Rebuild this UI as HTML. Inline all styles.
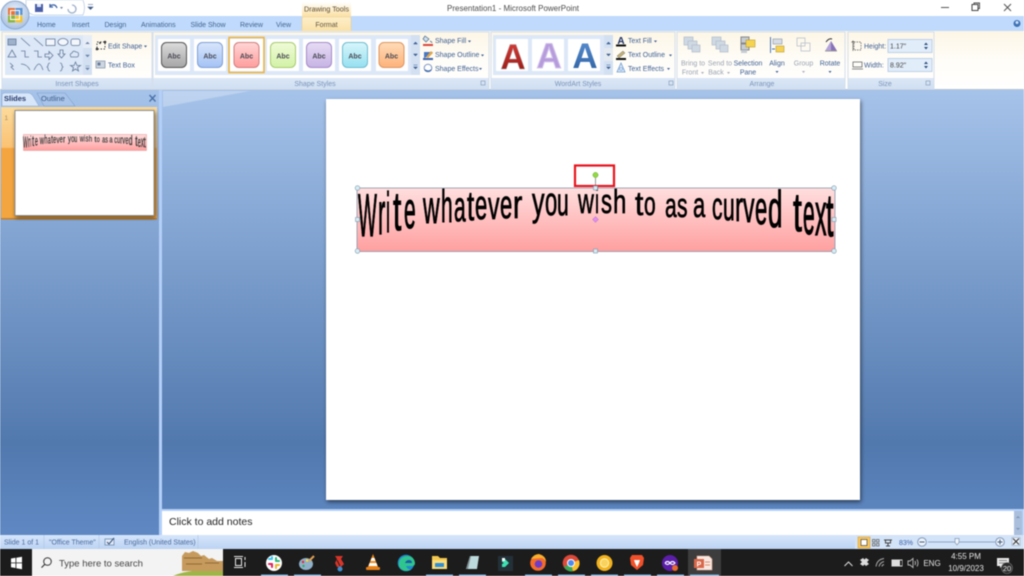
<!DOCTYPE html>
<html><head><meta charset="utf-8"><title>Presentation1 - Microsoft PowerPoint</title>
<style>html,body{margin:0;padding:0;width:1024px;height:576px;overflow:hidden;background:#fff}
svg{display:block;font-family:"Liberation Sans",sans-serif;filter:blur(.4px)}
.t{font-size:7px;fill:#3d5f92}.g{font-size:7px;fill:#7b93b8}.d{font-size:7px;fill:#9aa3b0}</style></head><body>
<svg width="1024" height="576" viewBox="0 0 1024 576" xmlns="http://www.w3.org/2000/svg">
<defs>
<linearGradient id="bg" x1="0" y1="0" x2="0" y2="1"><stop offset="0" stop-color="#a6c3ea"/><stop offset=".4" stop-color="#7a9dcc"/><stop offset=".79" stop-color="#5279ae"/><stop offset="1" stop-color="#6089c4"/></linearGradient>
<linearGradient id="rib" x1="0" y1="0" x2="0" y2="1"><stop offset="0" stop-color="#fdf6e6"/><stop offset=".5" stop-color="#fffdf8"/><stop offset="1" stop-color="#ffffff"/></linearGradient>
<linearGradient id="lab" x1="0" y1="0" x2="0" y2="1"><stop offset="0" stop-color="#dbe7f6"/><stop offset="1" stop-color="#cfdff2"/></linearGradient>
<linearGradient id="pink" x1="0" y1="0" x2="0" y2="1"><stop offset="0" stop-color="#ffdede"/><stop offset=".55" stop-color="#ffbcbc"/><stop offset="1" stop-color="#ff9f9f"/></linearGradient>
<linearGradient id="org" x1="0" y1="0" x2="0" y2="1"><stop offset="0" stop-color="#fcdb9c"/><stop offset=".36" stop-color="#fbc274"/><stop offset=".37" stop-color="#f5a540"/><stop offset="1" stop-color="#f3a63f"/></linearGradient>
<linearGradient id="fmt" x1="0" y1="0" x2="0" y2="1"><stop offset="0" stop-color="#fdeec9"/><stop offset="1" stop-color="#fbe1a8"/></linearGradient>
<linearGradient id="dt" x1="0" y1="0" x2="0" y2="1"><stop offset="0" stop-color="#fff"/><stop offset="1" stop-color="#fbdfa0"/></linearGradient>
<linearGradient id="b1" x1="0" y1="0" x2="0" y2="1"><stop offset="0" stop-color="#dcdcdc"/><stop offset="1" stop-color="#a5a5a5"/></linearGradient>
<linearGradient id="b2" x1="0" y1="0" x2="0" y2="1"><stop offset="0" stop-color="#d9e6fb"/><stop offset="1" stop-color="#a3c2f4"/></linearGradient>
<linearGradient id="b3" x1="0" y1="0" x2="0" y2="1"><stop offset="0" stop-color="#ffd6d6"/><stop offset="1" stop-color="#ff9d9d"/></linearGradient>
<linearGradient id="b4" x1="0" y1="0" x2="0" y2="1"><stop offset="0" stop-color="#f0fbd8"/><stop offset="1" stop-color="#d2f2a6"/></linearGradient>
<linearGradient id="b5" x1="0" y1="0" x2="0" y2="1"><stop offset="0" stop-color="#e6dcf4"/><stop offset="1" stop-color="#c7b3e4"/></linearGradient>
<linearGradient id="b6" x1="0" y1="0" x2="0" y2="1"><stop offset="0" stop-color="#d8f6fb"/><stop offset="1" stop-color="#95e0f0"/></linearGradient>
<linearGradient id="b7" x1="0" y1="0" x2="0" y2="1"><stop offset="0" stop-color="#ffdcb8"/><stop offset="1" stop-color="#fdb27a"/></linearGradient>
<linearGradient id="sts" x1="0" y1="0" x2="0" y2="1"><stop offset="0" stop-color="#d6e6fb"/><stop offset="1" stop-color="#bcd3f3"/></linearGradient>
<linearGradient id="ar" x1="0" y1="0" x2="0" y2="1"><stop offset="0" stop-color="#e0403a"/><stop offset="1" stop-color="#8e1512"/></linearGradient>
<linearGradient id="ab" x1="0" y1="0" x2="0" y2="1"><stop offset="0" stop-color="#5b92d4"/><stop offset="1" stop-color="#2a5d9e"/></linearGradient>
<radialGradient id="off" cx=".5" cy=".4" r=".6"><stop offset="0" stop-color="#f0f6ff"/><stop offset="1" stop-color="#a9c0df"/></radialGradient>
<filter id="sh" x="-5%" y="-5%" width="110%" height="110%"><feDropShadow dx="1" dy="2" stdDeviation="2" flood-color="#000" flood-opacity=".55"/></filter>
</defs>

<!-- title bar + tabs -->
<rect width="1024" height="16" fill="#fff"/>
<rect y="16" width="1024" height="16" fill="#bfdafc"/>
<path d="M26 0H83Q86 8 83 15H36Q29 15 26 9Z" fill="#fff" stroke="#b9cde6" stroke-width=".8"/>
<rect x="35" y="4" width="8" height="8" fill="#4a5fa8"/><rect x="37" y="4" width="4" height="3" fill="#dfe7f5"/>
<path d="M50 6q5-3 7 2M50 4v3h3" fill="none" stroke="#3c64a8" stroke-width="1.3"/>
<path d="M60 7h3l-1.500 2z" fill="#6b7fa0"/>
<path d="M68 9a4 4 0 1 0 4-4" fill="none" stroke="#9db0c9" stroke-width="1.300"/>
<path d="M88 4.500h5M88 7h5l-2.500 2.500z" fill="#3c5a85" stroke="#3c5a85" stroke-width=".6"/>
<circle cx="15" cy="15" r="14" fill="url(#off)" stroke="#8ea9cc"/>
<rect x="8" y="8" width="7" height="7" fill="#e8743a"/><rect x="15.500" y="8" width="7" height="7" fill="#5b93d3"/><rect x="8" y="15.500" width="7" height="7" fill="#8db43e"/><rect x="15.500" y="15.500" width="7" height="7" fill="#f4c431"/>
<rect x="10.500" y="10.500" width="9" height="9" fill="none" stroke="#fff" stroke-width="1"/>

<text x="447" y="11" font-size="8" fill="#4b4b4b" textLength="132" lengthAdjust="spacingAndGlyphs">Presentation1 - Microsoft PowerPoint</text>
<path d="M941 7.500h8" stroke="#555" stroke-width="1"/>
<rect x="972" y="4.500" width="6" height="6" fill="#fff" stroke="#444"/><path d="M974 4.500v-1.500h5.500v5.500h-1.500" fill="none" stroke="#444" stroke-width=".9"/>
<path d="M1004 4l7 7M1011 4l-7 7" stroke="#555" stroke-width="1"/>

<rect x="302" y="2" width="49" height="15" fill="url(#dt)"/>
<text x="304" y="11.500" font-size="7" fill="#5a4a2c" textLength="45" lengthAdjust="spacingAndGlyphs">Drawing Tools</text>
<path d="M302 31V19q0-2 2-2h45q2 0 2 2V31z" fill="url(#fmt)" stroke="#e8cf98" stroke-width=".6"/>
<text x="326.500" y="27" font-size="7" fill="#5f5540" text-anchor="middle">Format</text>
<g font-size="7" fill="#44638f">
<text x="37" y="27">Home</text><text x="72" y="27">Insert</text><text x="104.500" y="27">Design</text><text x="141" y="27">Animations</text><text x="190.500" y="27">Slide Show</text><text x="240" y="27">Review</text><text x="276" y="27">View</text>
</g>
<circle cx="1017" cy="23.500" r="3.500" fill="#3f72b5"/><circle cx="1017" cy="22.500" r="1.500" fill="#cfe0f5"/>

<!-- ribbon -->
<rect y="31" width="1024" height="58" fill="url(#rib)"/>
<rect y="89" width="1024" height="1.500" fill="#b9c5d6"/>
<g fill="url(#lab)"><rect x="2" y="78" width="150" height="11"/><rect x="153" y="78" width="336" height="11"/><rect x="491" y="78" width="184" height="11"/><rect x="677" y="78" width="168" height="11"/><rect x="848" y="78" width="86" height="11"/></g>
<g stroke="#d5dfec" stroke-width="1" fill="none"><rect x="2" y="32" width="150" height="57"/><rect x="153" y="32" width="336" height="57"/><rect x="491" y="32" width="184" height="57"/><rect x="677" y="32" width="168" height="57"/><rect x="848" y="32" width="86" height="57"/></g>
<text x="77" y="86" class="g" text-anchor="middle">Insert Shapes</text>
<text x="315" y="86" class="g" text-anchor="middle">Shape Styles</text>
<text x="578" y="86" class="g" text-anchor="middle">WordArt Styles</text>
<text x="762" y="86" class="g" text-anchor="middle">Arrange</text>
<text x="885" y="86" class="g" text-anchor="middle">Size</text>
<g fill="none" stroke="#8ba0bd" stroke-width=".7"><rect x="481" y="81" width="4" height="4"/><rect x="669" y="81" width="4" height="4"/><rect x="926" y="81" width="4" height="4"/></g>

<!-- insert shapes -->
<rect x="5" y="35" width="78" height="40" fill="#dce8f7"/>
<rect x="83" y="35" width="9" height="40" fill="#d2e0f2"/>
<rect x="83" y="35" width="9" height="13" fill="#e6edf6"/>
<path d="M85.500 44l2-2 2 2M85.500 55h4l-2 2zM85.500 66h4M85.500 68h4l-2 2z" fill="#6f86a8" stroke="#6f86a8" stroke-width=".5"/>
<g fill="none" stroke="#65799a" stroke-width=".8">
<rect x="8" y="39" width="8" height="6" fill="#9fb2cc"/><path d="M21 38l9 8M34 38l9 8"/><rect x="46" y="39" width="9" height="6.500" fill="#f3f6fb"/><ellipse cx="63" cy="42" rx="5" ry="3.500" fill="#f3f6fb"/><rect x="71" y="39" width="9" height="6.500" rx="2" fill="#f3f6fb"/>
<path d="M12 50l4 7h-8zM21 51h4v6h4M34 51h4v6h4M45 54h4v-2.500l4 4-4 4v-2.500h-4zM60 50h3v4h2l-3.500 4-3.500-4h2zM71 57q-2-3 1-4 1-3 4-1 3 0 2.500 3 0 2-2 2z"/>
<path d="M10 63l3 3-2 1 3 3M21 64q6 0 9 6M34 70q3-6 5-6t4 6M50 63q-2 0-2 3l-1 1 1 1q0 3 2 3M60 63q2 0 2 3l1 1-1 1q0 3-2 3M75.500 62l1.500 3.500h3.500l-3 2 1 3.500-3-2-3 2 1-3.500-3-2h3.500z"/>
</g>
<g transform="translate(96,41)"><rect x="1" y="1" width="8" height="7" fill="none" stroke="#444" stroke-dasharray="1.500 1.500"/><circle cx="1" cy="8" r="1.300" fill="#333"/><circle cx="9" cy="1" r="1.300" fill="#333"/><circle cx="4" cy="2" r="1" fill="#333"/></g>
<text x="108" y="48.500" class="t">Edit Shape</text><path d="M144 45.500h3l-1.500 2z" fill="#3d5f92"/>
<rect x="96" y="61" width="9" height="7" fill="#cdd6e2" stroke="#7e8ea6" stroke-width=".7"/><rect x="97.500" y="62.500" width="3" height="3" fill="#6a7c96"/>
<text x="108" y="67.500" class="t">Text Box</text>

<!-- shape styles -->
<rect x="155" y="35" width="256" height="40" fill="#dce8f7"/>
<rect x="411" y="35" width="9" height="40" fill="#d2e0f2"/>
<path d="M413.500 44l2-2 2 2zM413.500 54h4l-2 2zM413.500 65h4M413.500 67h4l-2 2z" fill="#3f6192" stroke="#3f6192" stroke-width=".5"/>
<g fill="#fff"><rect x="158" y="39" width="32" height="32"/><rect x="194" y="39" width="32" height="32"/><rect x="230" y="39" width="33" height="32"/><rect x="267" y="39" width="32" height="32"/><rect x="303" y="39" width="32" height="32"/><rect x="339" y="39" width="32" height="32"/><rect x="376" y="39" width="32" height="32"/></g>
<rect x="229" y="37.500" width="35" height="35" fill="none" stroke="#efb23b" stroke-width="1.500"/>
<rect x="161.500" y="42.500" width="25" height="25" rx="5" fill="url(#b1)" stroke="#565656"/>
<rect x="197.500" y="42.500" width="25" height="25" rx="5" fill="url(#b2)" stroke="#7f9fd6"/>
<rect x="234" y="42.500" width="25" height="25" rx="5" fill="url(#b3)" stroke="#d37c7c"/>
<rect x="270.500" y="42.500" width="25" height="25" rx="5" fill="url(#b4)" stroke="#a8cc70"/>
<rect x="306.500" y="42.500" width="25" height="25" rx="5" fill="url(#b5)" stroke="#a48bc8"/>
<rect x="342.500" y="42.500" width="25" height="25" rx="5" fill="url(#b6)" stroke="#6fbcd0"/>
<rect x="379" y="42.500" width="25" height="25" rx="5" fill="url(#b7)" stroke="#dd9560"/>
<g font-size="7" font-weight="bold" fill="#4a4a55" text-anchor="middle"><text x="174" y="58.500">Abc</text><text x="210" y="58.500">Abc</text><text x="246.500" y="58.500">Abc</text><text x="283" y="58.500">Abc</text><text x="319" y="58.500">Abc</text><text x="355" y="58.500">Abc</text><text x="391.500" y="58.500">Abc</text></g>
<path d="M425 36l4 3-3 3-3-3zM430 41q2 1 2 2" fill="#cfe0ef" stroke="#4a6a8a" stroke-width=".7"/><rect x="423" y="44" width="10" height="2" fill="#d8473c"/>
<path d="M424 52h9l-6 5-3 1z" fill="#4777c4"/><path d="M431 51l2 2-5 5-2-1z" fill="#e0a54a"/><rect x="423" y="58" width="10" height="2" fill="#3d63a8"/>
<circle cx="428" cy="68" r="3.800" fill="#fff" stroke="#7b95c4"/><path d="M424.500 69q4 3 7 0v1.500q-4 2.500-7 0z" fill="#3f68ac"/>
<text x="435" y="43" class="t">Shape Fill</text><path d="M468 40.500h3l-1.500 2z" fill="#3d5f92"/>
<text x="435" y="57" class="t">Shape Outline</text><path d="M481 54.500h3l-1.500 2z" fill="#3d5f92"/>
<text x="435" y="71" class="t">Shape Effects</text><path d="M479 68h3l-1.500 2z" fill="#3d5f92"/>

<!-- wordart -->
<rect x="493" y="35" width="111" height="40" fill="#dce8f7"/>
<rect x="604" y="35" width="9" height="40" fill="#d2e0f2"/>
<rect x="604" y="48" width="9" height="13" fill="#e4e9ef"/>
<path d="M606.500 44l2-2 2 2zM606.500 54h4l-2 2zM606.500 65h4M606.500 67h4l-2 2z" fill="#3f6192" stroke="#3f6192" stroke-width=".5"/>
<rect x="496" y="39" width="32" height="32" fill="#fff"/><rect x="532" y="39" width="32" height="32" fill="#fff"/><rect x="568" y="39" width="32" height="32" fill="#fff"/>
<g font-size="35" font-weight="bold" text-anchor="middle">
<text x="513" y="69" fill="url(#ar)" stroke="#b0b0b0" stroke-width=".5">A</text>
<text x="549" y="68" fill="#b79cdc" stroke="#d4c6ec" stroke-width="1">A</text>
<text x="585" y="68" fill="url(#ab)">A</text></g>
<g font-size="10" font-weight="bold" fill="#1b2f63" text-anchor="middle"><text x="621" y="44">A</text></g><rect x="616" y="44.500" width="10" height="2" fill="#111"/>
<path d="M617 56l6-5 2 2-6 5z" fill="#c2b07a" stroke="#555" stroke-width=".4"/><rect x="616" y="58" width="10" height="2" fill="#111"/>
<path d="M621 63l4 9h-8z" fill="#e3edf9" stroke="#6c9bd2" stroke-width=".8"/><circle cx="621" cy="69" r="1.500" fill="none" stroke="#6c9bd2" stroke-width=".6"/>
<text x="628" y="43" class="t">Text Fill</text><path d="M654 40.500h3l-1.500 2z" fill="#3d5f92"/>
<text x="628" y="57" class="t">Text Outline</text><path d="M669 54.500h3l-1.500 2z" fill="#3d5f92"/>
<text x="628" y="71" class="t">Text Effects</text><path d="M667 68h3l-1.500 2z" fill="#3d5f92"/>

<!-- arrange -->
<g fill="#cfd9e4" stroke="#b0bccb" stroke-width=".7"><rect x="684" y="37" width="9" height="8"/><rect x="688" y="41" width="9" height="8"/><rect x="692" y="45" width="8" height="7"/>
<rect x="712" y="37" width="9" height="8"/><rect x="716" y="41" width="9" height="8"/><rect x="720" y="45" width="8" height="7"/></g>
<rect x="741" y="37" width="8" height="6" fill="#c5ccd4" stroke="#888"/><rect x="741" y="44" width="8" height="6" fill="#c5ccd4" stroke="#888"/><rect x="746" y="40" width="9" height="7" fill="#f6d44f" stroke="#b79b33" stroke-width=".6"/><rect x="741" y="50" width="6" height="3" fill="#c5ccd4"/>
<path d="M770.500 37v16" stroke="#4f79b6" stroke-width="1"/><rect x="773" y="39" width="9" height="5" fill="#d6dde6" stroke="#8593a6" stroke-width=".6"/><rect x="776" y="46" width="8" height="6" fill="#f5d156" stroke="#b79b33" stroke-width=".6"/><path d="M772 49h3" stroke="#3d6bb0"/>
<g fill="none" stroke="#b8c1cd" stroke-width=".8"><rect x="797" y="38" width="8" height="8"/><rect x="801" y="43" width="9" height="8"/></g>
<path d="M825 51l6-10 6 10z" fill="#b3a3d8"/><path d="M831 41l6 10h-6z" fill="#8672b8"/><path d="M825 51h12" stroke="#999"/><path d="M826 42q3-4 6-3" fill="none" stroke="#222" stroke-width="1"/>
<g text-anchor="middle">
<text x="693" y="65.500" class="d">Bring to</text><text x="690" y="74.500" class="d">Front</text><path d="M701 72h3l-1.500 2z" fill="#aab"/>
<text x="720" y="65.500" class="d">Send to</text><text x="716" y="74.500" class="d">Back</text><path d="M727 72h3l-1.500 2z" fill="#aab"/>
<text x="748" y="65.500" class="t">Selection</text><text x="748" y="74.500" class="t">Pane</text>
<text x="777" y="65.500" class="t">Align</text><path d="M775.500 71h3l-1.500 2z" fill="#3d5f92"/>
<text x="803.500" y="65.500" class="d">Group</text><path d="M802 71h3l-1.500 2z" fill="#aab"/>
<text x="830" y="65.500" class="t">Rotate</text><path d="M828.500 71h3l-1.500 2z" fill="#3d5f92"/>
</g>

<!-- size -->
<g fill="none" stroke="#555" stroke-width=".7"><rect x="854" y="42" width="7" height="8" stroke-dasharray="1.500 1"/><path d="M853 41v10M851.500 42.500l1.500-1.500 1.500 1.500"/><rect x="853" y="62" width="9" height="5"/><path d="M852 69h11"/></g>
<text x="864" y="48.500" class="t">Height:</text><text x="864" y="67.500" class="t">Width:</text>
<rect x="888" y="39.500" width="44" height="13" fill="#e2edfa" stroke="#bcd0e8"/><rect x="888" y="58.500" width="44" height="13" fill="#e2edfa" stroke="#bcd0e8"/>
<text x="890" y="48.500" font-size="7" fill="#444">1.17"</text><text x="890" y="67.500" font-size="7" fill="#444">8.92"</text>
<path d="M924 45l2-2.500 2 2.500zM924 47h4l-2 2.500zM924 64l2-2.500 2 2.500zM924 66h4l-2 2.500z" fill="#2e4f80"/>

<!-- workspace -->
<rect y="90" width="1024" height="446" fill="url(#bg)"/>
<path d="M163 91H250L163 107z" fill="#fff" opacity=".28"/>
<rect x="159" y="90" width="3" height="446" fill="#b4d0f8"/>
<!-- slide pane -->
<path d="M2 106V96q0-3 3-3H28q3 0 5 3l6 10z" fill="#d8e6f9" stroke="#8fabd2" stroke-width=".6"/>
<path d="M37 93h28l10 13H44z" fill="#a9c4e8" stroke="#7f9fcb" stroke-width=".6"/>
<text x="4" y="101" font-size="7.500" font-weight="bold" fill="#24386b">Slides</text>
<text x="41" y="101" font-size="7.500" fill="#3c5b8c">Outline</text>
<path d="M149.500 95l6 6.500M155.500 95l-6 6.500" stroke="#4a72a8" stroke-width="1.400"/>
<rect x="1" y="107" width="156" height="112" fill="url(#org)"/>
<rect x="1" y="218" width="156" height="1.500" fill="#c47f2a"/>
<text x="4.500" y="120" font-size="6.500" fill="#a98d5e">1</text>
<rect x="15" y="110.500" width="139" height="105" fill="#fff" stroke="#8f8f8f" filter="url(#sh)"/>
<rect x="23.500" y="134.500" width="123" height="16" fill="url(#pink)" stroke="#e38d8d" stroke-width=".5"/>

<g transform="translate(-69.400,86) scale(.258,.26)" font-size="100" fill="#333" stroke="#333" stroke-width="2">
<text transform="translate(358,236) scale(.2,.6)">W</text><text transform="translate(378,234) scale(.22,.59)">r</text><text transform="translate(386,232) scale(.18,.57)">i</text><text transform="translate(393,230) scale(.3,.55)">t</text><text transform="translate(404,228) scale(.21,.52)">e</text>
<text transform="translate(423,223) scale(.23,.46)">w</text><text transform="translate(441,222) scale(.21,.45)">h</text><text transform="translate(454,221) scale(.21,.43)">a</text><text transform="translate(467,220) scale(.26,.42)">t</text><text transform="translate(475,219) scale(.22,.42)">e</text><text transform="translate(488,219) scale(.23,.4)">v</text><text transform="translate(500,218) scale(.22,.4)">e</text><text transform="translate(513,218) scale(.28,.4)">r</text>
<text transform="translate(532,215) scale(.25,.4)">y</text><text transform="translate(545,215) scale(.22,.4)">o</text><text transform="translate(557,215) scale(.21,.39)">u</text>
<text transform="translate(578,213) scale(.22,.35)">w</text><text transform="translate(595,213) scale(.18,.35)">i</text><text transform="translate(601,213) scale(.22,.34)">s</text><text transform="translate(613,213) scale(.24,.33)">h</text>
<text transform="translate(635,215) scale(.3,.33)">t</text><text transform="translate(644,215) scale(.21,.33)">o</text>
<text transform="translate(665,217) scale(.21,.34)">a</text><text transform="translate(677,217) scale(.21,.34)">s</text><text transform="translate(693,217) scale(.22,.35)">a</text>
<text transform="translate(712,219) scale(.21,.38)">c</text><text transform="translate(723,220) scale(.21,.4)">u</text><text transform="translate(735,221) scale(.24,.42)">r</text><text transform="translate(743,222) scale(.23,.44)">v</text><text transform="translate(755,224) scale(.22,.46)">e</text><text transform="translate(768,227) scale(.26,.52)">d</text>
<text transform="translate(793,231) scale(.32,.55)">t</text><text transform="translate(803,234) scale(.21,.58)">e</text><text transform="translate(815,235) scale(.23,.6)">x</text><text transform="translate(826,236) scale(.27,.6)">t</text>
</g>

<!-- main slide -->
<rect x="326" y="99" width="534" height="401" fill="#fff" filter="url(#sh)"/>
<rect x="357" y="188" width="478" height="63.500" fill="url(#pink)" stroke="#8a97ab" stroke-width=".8"/>
<g font-size="100" fill="#000" stroke="#000" stroke-width="2">
<text transform="translate(358,236) scale(.2,.6)">W</text><text transform="translate(378,234) scale(.22,.59)">r</text><text transform="translate(386,232) scale(.18,.57)">i</text><text transform="translate(393,230) scale(.3,.55)">t</text><text transform="translate(404,228) scale(.21,.52)">e</text>
<text transform="translate(423,223) scale(.23,.46)">w</text><text transform="translate(441,222) scale(.21,.45)">h</text><text transform="translate(454,221) scale(.21,.43)">a</text><text transform="translate(467,220) scale(.26,.42)">t</text><text transform="translate(475,219) scale(.22,.42)">e</text><text transform="translate(488,219) scale(.23,.4)">v</text><text transform="translate(500,218) scale(.22,.4)">e</text><text transform="translate(513,218) scale(.28,.4)">r</text>
<text transform="translate(532,215) scale(.25,.4)">y</text><text transform="translate(545,215) scale(.22,.4)">o</text><text transform="translate(557,215) scale(.21,.39)">u</text>
<text transform="translate(578,213) scale(.22,.35)">w</text><text transform="translate(595,213) scale(.18,.35)">i</text><text transform="translate(601,213) scale(.22,.34)">s</text><text transform="translate(613,213) scale(.24,.33)">h</text>
<text transform="translate(635,215) scale(.3,.33)">t</text><text transform="translate(644,215) scale(.21,.33)">o</text>
<text transform="translate(665,217) scale(.21,.34)">a</text><text transform="translate(677,217) scale(.21,.34)">s</text><text transform="translate(693,217) scale(.22,.35)">a</text>
<text transform="translate(712,219) scale(.21,.38)">c</text><text transform="translate(723,220) scale(.21,.4)">u</text><text transform="translate(735,221) scale(.24,.42)">r</text><text transform="translate(743,222) scale(.23,.44)">v</text><text transform="translate(755,224) scale(.22,.46)">e</text><text transform="translate(768,227) scale(.26,.52)">d</text>
<text transform="translate(793,231) scale(.32,.55)">t</text><text transform="translate(803,234) scale(.21,.58)">e</text><text transform="translate(815,235) scale(.23,.6)">x</text><text transform="translate(826,236) scale(.27,.6)">t</text>
</g>
<path d="M595.500 178v10" stroke="#999"/>
<rect x="575" y="165.500" width="39" height="20.500" fill="none" stroke="#e8121c" stroke-width="2.200"/>
<circle cx="595.500" cy="175" r="2.600" fill="#8fdc3e" stroke="#6f9f3a" stroke-width=".5"/>
<g fill="#d5ecf5" stroke="#7f97a8" stroke-width=".6">
<circle cx="357.500" cy="188" r="2.300"/><circle cx="834" cy="188" r="2.300"/><circle cx="357.500" cy="251" r="2.300"/><circle cx="834" cy="251" r="2.300"/>
<rect x="593.500" y="186" width="4" height="4"/><rect x="593.500" y="249" width="4" height="4"/><rect x="355.500" y="217.500" width="4" height="4"/><rect x="832" y="217.500" width="4" height="4"/></g>
<path d="M595.500 216.500l3 3-3 3-3-3z" fill="#e48cf0" stroke="#a77ab8" stroke-width=".5"/>

<!-- notes -->
<rect x="160" y="509" width="864" height="27" fill="#b4d0f8"/>
<rect x="162" y="511" width="852" height="24" fill="#fff"/>
<rect x="1014" y="511" width="8" height="24" fill="#a9bfdc"/>
<path d="M1016 518l2-2 2 2zM1016 528h4l-2 2z" fill="#7c92b2"/>
<text x="169" y="525" font-size="10.500" fill="#222">Click to add notes</text>

<!-- status bar -->
<rect y="535" width="1024" height="14" fill="url(#sts)"/>
<path d="M44 535v14M99 535v14M198 535v14" stroke="#aec4e2" stroke-width=".6"/>
<text x="4" y="544.500" font-size="7" fill="#49699c">Slide 1 of 1</text>
<text x="49" y="544.500" font-size="7" fill="#49699c">"Office Theme"</text>
<rect x="105" y="539" width="9" height="6" fill="#e3ecf7" stroke="#5f7ea8" stroke-width=".7"/><path d="M107 542l2 2 5-6" fill="none" stroke="#36507a" stroke-width="1"/>
<text x="124" y="544.500" font-size="7" fill="#49699c">English (United States)</text>
<rect x="855" y="535" width="169" height="14" fill="#d3e3f8"/>
<rect x="858" y="537" width="12" height="11" fill="#f7c65d" stroke="#dd9f2f" stroke-width=".6"/><rect x="861" y="539.500" width="6" height="6" fill="#fff" stroke="#444" stroke-width=".7"/>
<g fill="none" stroke="#555" stroke-width=".7"><rect x="872.500" y="539.500" width="2.500" height="2.500"/><rect x="876.500" y="539.500" width="2.500" height="2.500"/><rect x="872.500" y="543.500" width="2.500" height="2.500"/><rect x="876.500" y="543.500" width="2.500" height="2.500"/></g>
<path d="M884 540h8M885.500 540v3h5v-3M888 543v3M886 546h4" fill="none" stroke="#444" stroke-width="1"/>
<text x="899" y="545" font-size="7" fill="#3a62a8">83%</text>
<circle cx="922" cy="542" r="4.300" fill="#eef3fa" stroke="#8198b8"/><path d="M919.500 542h5" stroke="#445b7c"/>
<path d="M928 542h67" stroke="#8ea6c6"/><path d="M955 538.500h4v4l-2 2.500-2-2.500z" fill="#f2f6fb" stroke="#7f96b6" stroke-width=".7"/>
<circle cx="1000" cy="542" r="4.300" fill="#eef3fa" stroke="#8198b8"/><path d="M997.500 542h5M1000 539.500v5" stroke="#445b7c"/>
<rect x="1012" y="537.500" width="8" height="8" fill="#eef3fa" stroke="#8198b8" stroke-width=".5"/><path d="M1013 538.500l6 6M1019 538.500l-6 6" stroke="#333" stroke-width="1"/>

<!-- taskbar -->
<rect y="549" width="1024" height="27" fill="#1c1c1c"/>
<path d="M11 558.500l4.500-.7v4.700H11zM16.300 557.700l5.700-.9v5.700h-5.700zM11 563.300h4.500v4.700l-4.500-.7zM16.300 563.300H22v5.900l-5.700-.9z" fill="#fff"/>
<rect x="32" y="549" width="191" height="27" fill="#f3f3f3"/>
<circle cx="47.500" cy="561.500" r="3.800" fill="none" stroke="#333" stroke-width="1"/><path d="M44.800 564.300l-3.300 3.300" stroke="#333" stroke-width="1.100"/>
<text x="59" y="566.500" font-size="9.500" fill="#444">Type here to search</text>
<path d="M173 576q18-8 50-5v5z" fill="#9fb548"/>
<path d="M182 571v-15l3-4 4 1 4-2 5 2 3 3 3-1 5 4 3-1 5 3 6 0v10z" fill="#c69a5c"/>
<path d="M184 558h18M186 564h16M205 563h14" stroke="#8d6a38" stroke-width="1"/>
<g fill="none" stroke="#e8e8e8" stroke-width="1"><rect x="235.500" y="558.500" width="6" height="7"/><path d="M234 556.500h9M234 567.500h9M245 557v3M245 562v5"/></g>
<circle cx="274" cy="563" r="8" fill="#fff"/>
<path d="M272 559v-2M272 559h-3" stroke="#36c5f0" stroke-width="2" stroke-linecap="round"/><path d="M276 561h3M276 561v-3" stroke="#2eb67d" stroke-width="2" stroke-linecap="round"/><path d="M276 565v3M276 565h3" stroke="#ecb22e" stroke-width="2" stroke-linecap="round"/><path d="M272 567v-3M272 564h-3" stroke="#e01e5a" stroke-width="2" stroke-linecap="round"/>
<ellipse cx="306" cy="564" rx="7" ry="6" fill="#8fb0c8"/><circle cx="303" cy="562" r="1.200" fill="#e23"/><circle cx="307" cy="560.500" r="1.200" fill="#fd3"/><circle cx="303.500" cy="566" r="1.200" fill="#3a6"/><path d="M309 561l5-5" stroke="#e0a050" stroke-width="2"/>
<path d="M335 556h8l-2 3 3 5-3 3h-4l-2-4 2-4z" fill="#d8352a"/><circle cx="340" cy="569" r="2.500" fill="#3b8ed0"/><path d="M337 560l3 6" stroke="#222" stroke-width="1"/>
<path d="M373 554l5.500 14h-11z" fill="#f28a17"/><path d="M371.500 558h3l1 3h-5zM369.500 563h7l1 3h-9z" fill="#fff"/><rect x="366" y="567" width="14" height="3" rx="1" fill="#e8801a"/>
<circle cx="406" cy="563" r="8.300" fill="#1f8ad0"/><path d="M399 566q-1-9 8-10 7 0 8 7 0 3-3 3h-6q1 3 5 4-9 3-12-4z" fill="#2fc58e"/><path d="M405 563q1-3 4-3 3 0 3 3z" fill="#1c5aa6"/>
<path d="M432 556h6l2 2h7v11h-15z" fill="#f4c74f"/><rect x="432" y="560" width="15" height="9" fill="#fcdd7a"/><rect x="435" y="563" width="9" height="4" fill="#2f8ed6"/>
<path d="M466 569l4-13h9l-2 13z" fill="#bcd9dc"/><path d="M466 569l4-13 1 0-3 13z" fill="#7f8f92"/>
<rect x="498" y="556" width="15" height="15" fill="#233038"/><path d="M502 559l3 0 4 4-4 4-3 0 0-3 2-1-2-1z" fill="#3de0b2"/><rect x="502" y="558" width="3" height="3" fill="#fff"/>
<circle cx="538" cy="563" r="7.800" fill="#f56b2a"/><path d="M531 559q3-5 8-5 7 2 7 8-2-4-5-4z" fill="#fbb02f"/><circle cx="538.500" cy="564" r="3.800" fill="#6d3dc9"/>
<circle cx="571" cy="563" r="8.300" fill="#dd4a3a"/><path d="M571 563l-7 4a8.300 8.300 0 0 0 9 4.300z" fill="#3aa757"/><path d="M571 563l8 -3a8.300 8.300 0 0 1-6 11.300z" fill="#fbc02d"/><circle cx="571" cy="563" r="4" fill="#fff"/><circle cx="571" cy="563" r="3" fill="#4a8bf0"/>
<circle cx="604.500" cy="563" r="8" fill="#f2b21e"/><circle cx="604.500" cy="563" r="4.200" fill="#f8d25c" stroke="#fff0b0" stroke-width="1"/>
<path d="M632 555h10l2 3-1 7-6 5-6-5-1-7z" fill="#f0502a"/><path d="M634 560h6l-1 3-2 4-2-4z" fill="#fff"/>
<circle cx="670" cy="563" r="8" fill="#5a1ea8"/><path d="M665 563q2.500-3 5 0t5 0q-2.500-3-5 0t-5 0" fill="none" stroke="#fff" stroke-width="1.200"/><circle cx="675" cy="568" r="3" fill="#e86a2c"/>
<rect x="688" y="549" width="33" height="27" fill="#3d3d3d"/>
<path d="M697 556h12l3 3v11h-15z" fill="#f7e9e2" stroke="#e5a48d" stroke-width=".6"/><rect x="694" y="559" width="10" height="9" fill="#d9684a"/><text x="699" y="566.500" font-size="7" font-weight="bold" fill="#fff" text-anchor="middle">P</text><path d="M705 562h5M705 565h5" stroke="#e08a6c"/>
<g fill="#7fb4dc"><rect x="261" y="574.500" width="27" height="1.500"/><rect x="294" y="574.500" width="27" height="1.500"/><rect x="426" y="574.500" width="27" height="1.500"/><rect x="459" y="574.500" width="27" height="1.500"/><rect x="525" y="574.500" width="27" height="1.500"/><rect x="558" y="574.500" width="27" height="1.500"/><rect x="591" y="574.500" width="27" height="1.500"/><rect x="624" y="574.500" width="27" height="1.500"/><rect x="657" y="574.500" width="27" height="1.500"/><rect x="690" y="574.500" width="29" height="1.500"/></g>
<path d="M844.500 566l4-4 4 4" fill="none" stroke="#ddd" stroke-width="1"/>
<path d="M860 560l3-2 1.500 1.500 1.500-1.500 3 2-2 2 2 2-3 2-1.500-1.500-1.500 1.500-3-2 2-2z" fill="#ddd"/>
<path d="M876 566.500q1-7 8-8M879 566.500q1-4 5-5M882 566.500q0-1.500 2-2" fill="none" stroke="#aaa" stroke-width="1"/>
<rect x="892" y="560" width="10" height="6" fill="#ddd" stroke="#ddd"/><rect x="900" y="560.500" width="2" height="5" fill="#1c1c1c"/>
<path d="M908 561h2l3-2.500v9l-3-2.500h-2zM915 561q1 2 0 4M917 559.500q2 3.500 0 7" fill="none" stroke="#bbb" stroke-width=".9"/>
<text x="932" y="566" font-size="8" fill="#e6e6e6" text-anchor="middle">ENG</text>
<text x="966" y="559" font-size="8" fill="#e6e6e6" text-anchor="middle">4:55 PM</text>
<text x="966" y="571" font-size="8" fill="#e6e6e6" text-anchor="middle">10/9/2023</text>
<path d="M997 558h12v8h-7l-2 2v-2h-3z" fill="#e8e8e8"/><path d="M999 560.500h8M999 563h8" stroke="#666" stroke-width=".8"/>
<circle cx="1007" cy="568" r="5.500" fill="#2b2b2b" stroke="#777" stroke-width=".6"/><text x="1007" y="571" font-size="7.500" fill="#eee" text-anchor="middle">20</text>
</svg>
</body></html>
